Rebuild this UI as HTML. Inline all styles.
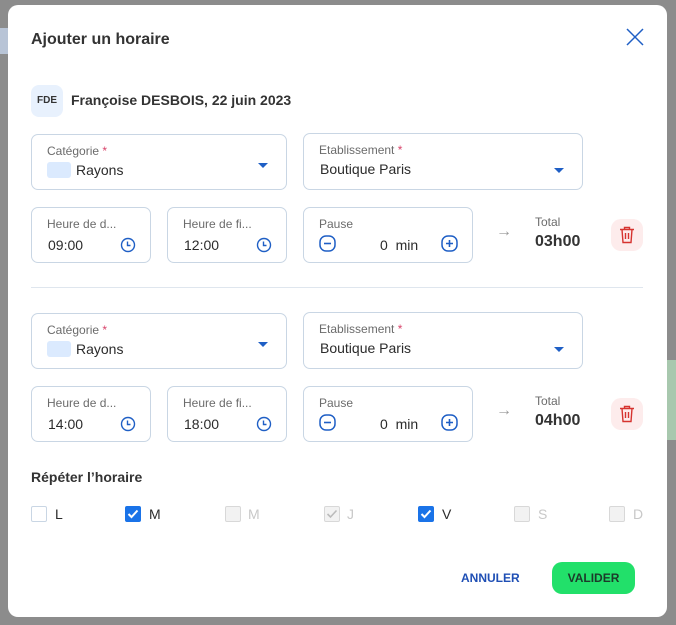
<!DOCTYPE html>
<html><head><meta charset="utf-8"><style>
*{box-sizing:border-box;margin:0;padding:0}
body{width:676px;height:625px;background:#8c8c8c;font-family:"Liberation Sans",sans-serif;position:relative;overflow:hidden;color:#2b2b2b}
.a{position:absolute}
.modal{left:8px;top:5px;width:659px;height:612px;background:#fff;border-radius:10px}
.box{position:absolute;border:1px solid #c9d6e4;border-radius:7px;background:#fff}
.lbl{position:absolute;left:15px;top:9px;font-size:12px;color:#6b6b6b;white-space:nowrap}
.lbl b{color:#d8436a;font-weight:normal}
.val{position:absolute;left:15px;top:27px;font-size:14px;color:#2b2b2b;white-space:nowrap}
.caret{position:absolute;width:0;height:0;border-left:5px solid transparent;border-right:5px solid transparent;border-top:5px solid #1f5fc5}
.chip{display:inline-block;width:24px;height:16px;background:#dbeafe;border-radius:3px;vertical-align:-3px;margin-right:5px}
.cb{position:absolute;width:16px;height:16px;border:1px solid #c9d6e4;border-radius:2px;background:#fff}
.cb.on{background:#1a73e8;border-color:#1a73e8}
.cb.dis{background:#f2f2f2;border-color:#d8d8d8}
.day{position:absolute;font-size:14px}
</style></head><body>
<div class="a" style="left:0;top:28px;width:8px;height:26px;background:#b8c4d6"></div>
<div class="a" style="left:667px;top:360px;width:9px;height:80px;background:#a8c8ae"></div>
<div class="a modal"></div>
<div class="a" style="left:31px;top:31px;font-size:16px;font-weight:bold;color:#333">Ajouter un horaire</div>
<svg class="a" style="left:626px;top:28px" width="18" height="18" viewBox="0 0 18 18"><path d="M1 1L17 17M17 1L1 17" stroke="#1f5fc5" stroke-width="1.5"/></svg>
<div class="a" style="left:31px;top:85px;width:32px;height:32px;background:#e8f1fd;border-radius:8px;font-size:10px;font-weight:bold;text-align:center;line-height:32px;color:#333">FDE</div>
<div class="a" style="left:71px;top:92px;font-size:14px;font-weight:bold;color:#333">Françoise DESBOIS, 22 juin 2023</div>

<!-- group template repeated -->
<div id="g1">
<div class="box" style="left:31px;top:134px;width:256px;height:56px"><div class="lbl">Catégorie <b>*</b></div><div class="val"><span class="chip"></span>Rayons</div><div class="caret" style="left:226px;top:28px"></div></div>
<div class="box" style="left:303px;top:133px;width:280px;height:57px"><div class="lbl">Etablissement <b>*</b></div><div class="val" style="left:16px">Boutique Paris</div><div class="caret" style="left:250px;top:34px"></div></div>
<div class="box" style="left:31px;top:207px;width:120px;height:56px"><div class="lbl">Heure de d...</div><div class="val" style="left:16px;top:29px">09:00</div>
<svg class="a" style="left:88px;top:29px" width="16" height="16" viewBox="0 0 16 16"><circle cx="8" cy="8" r="6.5" fill="none" stroke="#1f5fc5" stroke-width="1.4"/><path d="M7.5 4.5V8.5H10.5" fill="none" stroke="#1f5fc5" stroke-width="1.4"/></svg></div>
<div class="box" style="left:167px;top:207px;width:120px;height:56px"><div class="lbl">Heure de fi...</div><div class="val" style="left:16px;top:29px">12:00</div>
<svg class="a" style="left:88px;top:29px" width="16" height="16" viewBox="0 0 16 16"><circle cx="8" cy="8" r="6.5" fill="none" stroke="#1f5fc5" stroke-width="1.4"/><path d="M7.5 4.5V8.5H10.5" fill="none" stroke="#1f5fc5" stroke-width="1.4"/></svg></div>
<div class="box" style="left:303px;top:207px;width:170px;height:56px"><div class="lbl">Pause</div>
<svg class="a" style="left:15px;top:27px" width="17" height="17" viewBox="0 0 17 17"><rect x="1" y="1" width="15" height="15" rx="6" fill="none" stroke="#1f5fc5" stroke-width="1.5"/><path d="M5 8.5H12" stroke="#1f5fc5" stroke-width="1.6"/></svg>
<div class="val" style="left:76px;top:29px">0&nbsp; min</div>
<svg class="a" style="left:137px;top:27px" width="17" height="17" viewBox="0 0 17 17"><rect x="1" y="1" width="15" height="15" rx="6" fill="none" stroke="#1f5fc5" stroke-width="1.5"/><path d="M5 8.5H12M8.5 5V12" stroke="#1f5fc5" stroke-width="1.6"/></svg></div>
<div class="a" style="left:496px;top:223px;font-size:16px;color:#999">→</div>
<div class="a" style="left:535px;top:215px;font-size:12px;color:#6b6b6b">Total</div>
<div class="a" style="left:535px;top:233px;font-size:16px;font-weight:bold;color:#333">03h00</div>
<div class="a" style="left:611px;top:219px;width:32px;height:32px;border-radius:10px;background:#fdecec"></div>
<svg class="a" style="left:619px;top:226px" width="16" height="18" viewBox="0 0 16 18"><path d="M1 3.5H15M5.5 3.5V1.5H10.5V3.5M3 3.5L4 16.5H12L13 3.5M6.5 7V13M9.5 7V13" fill="none" stroke="#d6332f" stroke-width="1.4"/></svg>
</div>

<div class="a" style="left:31px;top:287px;width:612px;height:1px;background:#dfe6ee"></div>

<div style="position:absolute;left:0;top:179px;width:676px;height:300px">
<div class="box" style="left:31px;top:134px;width:256px;height:56px"><div class="lbl">Catégorie <b>*</b></div><div class="val"><span class="chip"></span>Rayons</div><div class="caret" style="left:226px;top:28px"></div></div>
<div class="box" style="left:303px;top:133px;width:280px;height:57px"><div class="lbl">Etablissement <b>*</b></div><div class="val" style="left:16px">Boutique Paris</div><div class="caret" style="left:250px;top:34px"></div></div>
<div class="box" style="left:31px;top:207px;width:120px;height:56px"><div class="lbl">Heure de d...</div><div class="val" style="left:16px;top:29px">14:00</div>
<svg class="a" style="left:88px;top:29px" width="16" height="16" viewBox="0 0 16 16"><circle cx="8" cy="8" r="6.5" fill="none" stroke="#1f5fc5" stroke-width="1.4"/><path d="M7.5 4.5V8.5H10.5" fill="none" stroke="#1f5fc5" stroke-width="1.4"/></svg></div>
<div class="box" style="left:167px;top:207px;width:120px;height:56px"><div class="lbl">Heure de fi...</div><div class="val" style="left:16px;top:29px">18:00</div>
<svg class="a" style="left:88px;top:29px" width="16" height="16" viewBox="0 0 16 16"><circle cx="8" cy="8" r="6.5" fill="none" stroke="#1f5fc5" stroke-width="1.4"/><path d="M7.5 4.5V8.5H10.5" fill="none" stroke="#1f5fc5" stroke-width="1.4"/></svg></div>
<div class="box" style="left:303px;top:207px;width:170px;height:56px"><div class="lbl">Pause</div>
<svg class="a" style="left:15px;top:27px" width="17" height="17" viewBox="0 0 17 17"><rect x="1" y="1" width="15" height="15" rx="6" fill="none" stroke="#1f5fc5" stroke-width="1.5"/><path d="M5 8.5H12" stroke="#1f5fc5" stroke-width="1.6"/></svg>
<div class="val" style="left:76px;top:29px">0&nbsp; min</div>
<svg class="a" style="left:137px;top:27px" width="17" height="17" viewBox="0 0 17 17"><rect x="1" y="1" width="15" height="15" rx="6" fill="none" stroke="#1f5fc5" stroke-width="1.5"/><path d="M5 8.5H12M8.5 5V12" stroke="#1f5fc5" stroke-width="1.6"/></svg></div>
<div class="a" style="left:496px;top:223px;font-size:16px;color:#999">→</div>
<div class="a" style="left:535px;top:215px;font-size:12px;color:#6b6b6b">Total</div>
<div class="a" style="left:535px;top:233px;font-size:16px;font-weight:bold;color:#333">04h00</div>
<div class="a" style="left:611px;top:219px;width:32px;height:32px;border-radius:10px;background:#fdecec"></div>
<svg class="a" style="left:619px;top:226px" width="16" height="18" viewBox="0 0 16 18"><path d="M1 3.5H15M5.5 3.5V1.5H10.5V3.5M3 3.5L4 16.5H12L13 3.5M6.5 7V13M9.5 7V13" fill="none" stroke="#d6332f" stroke-width="1.4"/></svg>
</div>

<div class="a" style="left:31px;top:469px;font-size:14px;font-weight:bold;color:#333">Répéter l’horaire</div>
<div class="cb" style="left:31px;top:506px"></div><div class="day" style="left:55px;top:506px">L</div>
<div class="cb on" style="left:125px;top:506px"><svg width="14" height="14" viewBox="0 0 14 14"><path d="M2.5 7L5.5 10L11.5 3.5" fill="none" stroke="#fff" stroke-width="2"/></svg></div><div class="day" style="left:149px;top:506px">M</div>
<div class="cb dis" style="left:225px;top:506px"></div><div class="day" style="left:248px;top:506px;color:#c8c8c8">M</div>
<div class="cb dis" style="left:324px;top:506px"><svg width="14" height="14" viewBox="0 0 14 14"><path d="M2.5 7L5.5 10L11.5 3.5" fill="none" stroke="#bbb" stroke-width="1.6"/></svg></div><div class="day" style="left:347px;top:506px;color:#c8c8c8">J</div>
<div class="cb on" style="left:418px;top:506px"><svg width="14" height="14" viewBox="0 0 14 14"><path d="M2.5 7L5.5 10L11.5 3.5" fill="none" stroke="#fff" stroke-width="2"/></svg></div><div class="day" style="left:442px;top:506px">V</div>
<div class="cb dis" style="left:514px;top:506px"></div><div class="day" style="left:538px;top:506px;color:#c8c8c8">S</div>
<div class="cb dis" style="left:609px;top:506px"></div><div class="day" style="left:633px;top:506px;color:#c8c8c8">D</div>

<div class="a" style="left:461px;top:571px;font-size:12px;font-weight:bold;color:#1f4fb5">ANNULER</div>
<div class="a" style="left:552px;top:562px;width:83px;height:32px;background:#22e06a;border-radius:10px;font-size:12px;font-weight:bold;color:#1c3a2a;text-align:center;line-height:32px">VALIDER</div>
</body></html>
